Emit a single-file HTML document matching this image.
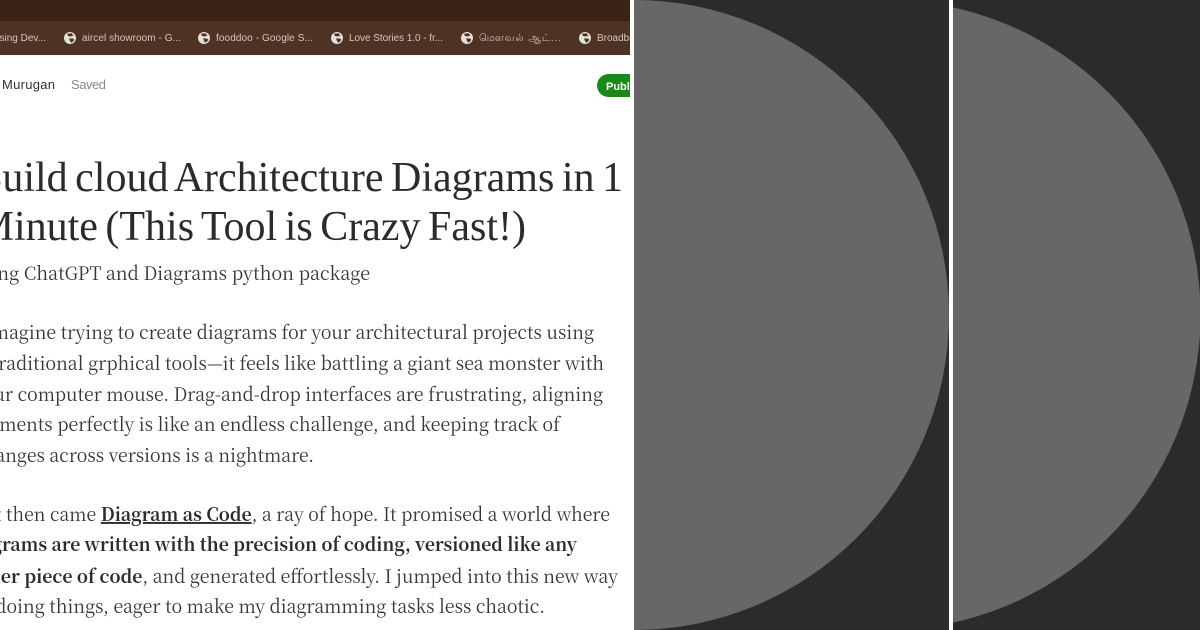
<!DOCTYPE html>
<html><head><meta charset="utf-8"><style>
html,body{margin:0;padding:0;background:#fff;width:1200px;height:630px;overflow:hidden}
svg{display:block;position:absolute;left:0;top:0}
.t{font-family:"Noto Serif CJK SC","Liberation Serif",serif;font-size:18.8px;fill:#363636}
.h{font-family:"Liberation Serif",serif;font-size:42px;fill:#2b2b2b;word-spacing:-3px}
.n{font-family:"Liberation Sans","Noto Sans CJK SC",sans-serif;font-size:10px;fill:#d3c8be}
.m{font-family:"Liberation Sans",sans-serif;font-size:13px}
</style></head><body>
<svg width="1200" height="630" viewBox="0 0 1200 630" xmlns="http://www.w3.org/2000/svg">
<defs>
<clipPath id="l"><rect x="0" y="0" width="630" height="630"/></clipPath>
<clipPath id="a"><rect x="634" y="0" width="315" height="630"/></clipPath>
<clipPath id="b"><rect x="953" y="0" width="247" height="630"/></clipPath>
<filter id="s" x="0" y="0" width="100%" height="100%" color-interpolation-filters="sRGB"><feGaussianBlur stdDeviation="0.3"/></filter>
<g id="g"><circle cx="0" cy="0" r="6" fill="#e6e0da"/><path d="M-3 -4.2L1.5 -4.8L3.5 -2.5L0.5 -1.5L-2 -2ZM-1 0.5L3 0.5L4.5 2L1.5 4.8L0 3Z" fill="#4e3324"/></g>
</defs>
<rect width="1200" height="630" fill="#fff"/>
<g clip-path="url(#l)"><g filter="url(#s)">
<rect x="0" y="0" width="640" height="21" fill="#3a2415"/>
<rect x="0" y="21" width="640" height="34" fill="#4e3324"/>
<text class="n" x="46" y="41" text-anchor="end">Using Dev...</text>
<use href="#g" x="70" y="38"/><text class="n" x="82" y="41" textLength="99">aircel showroom - G...</text>
<use href="#g" x="204" y="38"/><text class="n" x="216" y="41" textLength="97">fooddoo - Google S...</text>
<use href="#g" x="337" y="38"/><text class="n" x="349" y="41" textLength="94">Love Stories 1.0 - fr...</text>
<use href="#g" x="467" y="38"/><text class="n" x="479" y="41" textLength="82">மௌவல் ஆட்...</text>
<use href="#g" x="585" y="38"/><text class="n" x="597" y="41">Broadband</text>
<text class="m" x="2" y="89" fill="#333" textLength="53">Murugan</text>
<text class="m" x="71" y="89" fill="#8a8a8a" textLength="35">Saved</text>
<rect x="597" y="74" width="70" height="23" rx="11.5" fill="#1a8917"/>
<text x="606" y="90" font-family="Liberation Sans,sans-serif" font-size="11" font-weight="700" fill="#fff">Publish</text>
<text class="h" x="623" y="191" text-anchor="end">Build cloud Architecture Diagrams in 1</text>
<text class="h" x="526" y="240" text-anchor="end">Minute (This Tool is Crazy Fast!)</text>
<text class="t" transform="translate(370 280) scale(.954 1)" text-anchor="end">Using ChatGPT and Diagrams python package</text>
<text class="t" transform="translate(594 339) scale(.943 1)" text-anchor="end">Imagine trying to create diagrams for your architectural projects using</text>
<text class="t" transform="translate(604 370) scale(.943 1)" text-anchor="end">traditional grphical tools—it feels like battling a giant sea monster with</text>
<text class="t" transform="translate(603 401) scale(.943 1)" text-anchor="end">your computer mouse. Drag-and-drop interfaces are frustrating, aligning</text>
<text class="t" transform="translate(560 431) scale(.943 1)" text-anchor="end">elements perfectly is like an endless challenge, and keeping track of</text>
<text class="t" transform="translate(314 462) scale(.943 1)" text-anchor="end">changes across versions is a nightmare.</text>
<text class="t" transform="translate(610 521) scale(.941 1)" text-anchor="end">But then came <tspan font-weight="700" text-decoration="underline" fill="#2b2b2b">Diagram as Code</tspan>, a ray of hope. It promised a world where</text>
<text class="t" transform="translate(577 551) scale(.933 1)" text-anchor="end" font-weight="700" style="fill:#2b2b2b">diagrams are written with the precision of coding, versioned like any</text>
<text class="t" transform="translate(618 583) scale(.943 1)" text-anchor="end"><tspan font-weight="700" fill="#2b2b2b">other piece of code</tspan>, and generated effortlessly. I jumped into this new way</text>
<text class="t" transform="translate(545 613) scale(.943 1)" text-anchor="end">of doing things, eager to make my diagramming tasks less chaotic.</text>
</g></g>
<rect x="634" y="0" width="315" height="630" fill="#2b2b2b"/>
<circle cx="634" cy="315" r="315" fill="#676767" clip-path="url(#a)"/>
<rect x="953" y="0" width="247" height="630" fill="#2b2b2b"/>
<circle cx="885.5" cy="315" r="315" fill="#676767" clip-path="url(#b)"/>
</svg>
</body></html>
